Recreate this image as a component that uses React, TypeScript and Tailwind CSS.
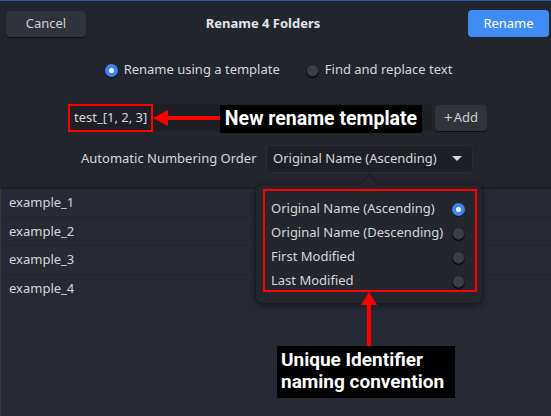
import React from "react";

const ui = { fontFamily: '"Noto Sans", "Open Sans", sans-serif' };
const anno = { fontFamily: 'Roboto, "Noto Sans", sans-serif' };

function Radio({ on }: { on?: boolean }) {
  return on ? (
    <span className="w-[13px] h-[13px] rounded-full bg-[#3a85f2] flex items-center justify-center shadow-[0_1px_1px_rgba(0,0,0,0.5)]">
      <span className="w-[5px] h-[5px] rounded-full bg-white" />
    </span>
  ) : (
    <span className="w-[13px] h-[13px] rounded-full bg-[#3a3c47] border border-[#1f2026] shadow-[0_1px_1px_rgba(0,0,0,0.9)]" />
  );
}

export default function App() {
  const rows = ["example_1", "example_2", "example_3", "example_4"];
  const opts = [
    "Original Name (Ascending)",
    "Original Name (Descending)",
    "First Modified",
    "Last Modified",
  ];
  return (
    <div
      className="relative w-[551px] h-[416px] overflow-hidden bg-[#23252d] border-t border-[#2656a8] flex flex-col text-[13px] text-[#d6d7db]"
      style={ui}
    >
      {/* header */}
      <div className="flex items-center pl-[6px] pr-[2px] pt-[9px] h-[36px]">
        <button className="w-[80px] h-[26px] rounded-[4px] bg-[#30323c] text-[#d0d1d5] shadow-[0_1px_1px_rgba(0,0,0,0.6)]">
          Cancel
        </button>
        <div className="flex-1 text-center font-bold text-[#e4e5e8] pr-[28px]">Rename 4 Folders</div>
        <button className="w-[81px] h-[27px] rounded-[4px] bg-[#3f8cf6] text-white">
          Rename
        </button>
      </div>

      {/* mode radios */}
      <div className="flex items-center justify-center gap-[6px] mt-[23px] h-[20px] pl-[6px]">
        <Radio on />
        <span>Rename using a template</span>
        <span className="w-[14px]" />
        <Radio />
        <span>Find and replace text</span>
      </div>

      {/* template input */}
      <div className="flex items-center mt-[24px] ml-[68px] h-[27px]">
        <div className="w-[364px] h-[27px] rounded-[3px] bg-[#1e1f25] flex items-center pl-[6px]">
          test_[1, 2, 3]
        </div>
        <button className="ml-[3px] w-[52px] h-[26px] rounded-[4px] bg-[#30323c] text-[#d0d1d5] shadow-[0_1px_1px_rgba(0,0,0,0.6)] flex items-center justify-center">
          <span className="text-[15px] leading-none mr-[1px]">+</span>Add
        </button>
      </div>

      {/* numbering order */}
      <div className="flex items-center mt-[14px] h-[28px]">
        <span className="ml-[81px] w-[185px]">Automatic Numbering Order</span>
        <div className="w-[207px] h-[28px] rounded-[4px] bg-[#1e1f25] border border-[#2a2c34] flex items-center pl-[6px] pr-[8px] justify-between">
          <span>Original Name (Ascending)</span>
          <svg width="10" height="6" viewBox="0 0 10 6" className="mr-[2px]">
            <path d="M0 0 H10 L5 5 Z" fill="#d6d7db" />
          </svg>
        </div>
      </div>

      {/* list */}
      <div className="mt-[14px] flex-1 bg-[#272934] border-t-2 border-[#1c1d23] border-l border-l-[#33353f]">
        {rows.map((r, i) => (
          <div
            key={r}
            className={`h-[28.5px] flex items-center pl-[8px] ${i < 3 ? "border-b border-[#23252d]" : ""}`}
          >
            {r}
          </div>
        ))}
      </div>

      {/* popover */}
      <div className="absolute left-[255px] top-[183px] w-[228px] h-[120px] rounded-[8px] bg-[#24262e] border border-[#1b1c22] shadow-[0_2px_6px_rgba(0,0,0,0.4)] pt-[4px] pl-[7px]">
        <div className="absolute left-[106px] -top-[8px] w-[14px] h-[14px] rotate-45 bg-[#24262e] border-l border-t border-[#1b1c22]" />
        <div className="relative w-[214px] h-[103px] border-2 border-[#ff0000] pt-[6px]">
          {opts.map((o, i) => (
            <div key={o} className="h-[24px] flex items-center justify-between pl-[6px] pr-[10px]">
              <span>{o}</span>
              <Radio on={i === 0} />
            </div>
          ))}
        </div>
      </div>

      {/* annotation: template */}
      <div className="absolute left-[68px] top-[103px] w-[85px] h-[28px] border-2 border-[#ff0000]" />
      <svg className="absolute left-[153px] top-[108px]" width="70" height="18" viewBox="0 0 70 18">
        <path d="M0 9 L15 1 L15 7 L70 7 L70 11 L15 11 L15 17 Z" fill="#ff0000" />
      </svg>
      <div
        className="absolute left-[220px] top-[104px] w-[202px] h-[28px] bg-black text-white font-bold text-[19.5px] flex items-center justify-center"
        style={anno}
      >
        New rename template
      </div>

      {/* annotation: unique identifier */}
      <svg className="absolute left-[360px] top-[291px]" width="18" height="55" viewBox="0 0 18 55">
        <path d="M9 0 L17 13 L11 13 L11 55 L7 55 L7 13 L1 13 Z" fill="#ff0000" />
      </svg>
      <div
        className="absolute left-[277px] top-[345px] w-[178px] h-[52px] bg-black text-white font-bold text-[19px] leading-[22px] pl-[4px] pt-[3px]"
        style={anno}
      >
        Unique Identifier
        <br />
        naming convention
      </div>
    </div>
  );
}
